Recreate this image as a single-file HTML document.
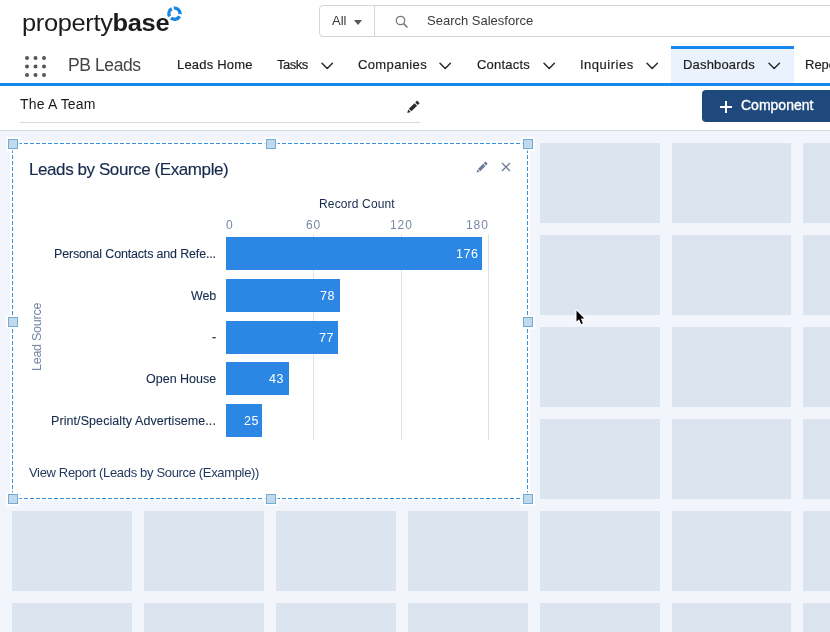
<!DOCTYPE html>
<html><head><meta charset="utf-8">
<style>
*{margin:0;padding:0;box-sizing:border-box}
html,body{width:830px;height:632px;overflow:hidden;background:#f2f5fb;font-family:"Liberation Sans",sans-serif}
.a{position:absolute;white-space:nowrap;will-change:transform}
.st{-webkit-text-stroke:0.2px currentColor}
#top{position:absolute;left:0;top:0;width:830px;height:131px;background:#fff;border-bottom:1px solid #d6dbe4}
.logo{left:22px;top:10px;font-size:23px;color:#1c1c1c;letter-spacing:-0.3px;transform:scaleX(1.105);transform-origin:0 0}
.logo b{font-weight:bold}
.search{left:319px;top:5px;width:540px;height:32px;border:1px solid #d4d4d4;border-radius:4px;background:#fff}
.search .div{position:absolute;left:54px;top:0;width:1px;height:30px;background:#d4d4d4}
.nav{font-size:13px;color:#1f1f1f;-webkit-text-stroke:0.2px #1f1f1f}
.bluebar{left:0;top:83px;width:830px;height:3px;background:#1589ee}
.seltab{left:671px;top:46px;width:123px;height:37px;background:#eaf3fd;border-top:3px solid #1589ee}
.btn{left:702px;top:90px;width:140px;height:32px;background:#1f497d;border-radius:4px}
.cell{position:absolute;width:120px;height:80px;background:#dce5ef}
#card{position:absolute;left:10px;top:141px;width:520px;height:359px;background:#fff}
.dash{position:absolute;background-repeat:repeat}
.h{position:absolute;width:10px;height:10px;background:#bfdaee;border:1px solid #78a9cf;box-shadow:0 0 0 2px rgba(255,255,255,.75)}
.navy{color:#152a4c}
.grey{color:#54698d}
.bar{position:absolute;left:226px;height:33px;background:#2b87e3}
.gl{position:absolute;top:234px;width:1px;height:206px;background:#dde2ea}
.lbl{font-size:12.5px;color:#152a4c;-webkit-text-stroke:0.1px #152a4c;text-align:right;letter-spacing:-0.17px;margin-top:1px}
.val{font-size:12.5px;color:#fff;letter-spacing:0.5px}
.tk{font-size:12px;letter-spacing:0.9px;color:#7688a3}
</style></head><body>
<div id="top"></div>
<div class="a logo">property<b>base</b></div>
<svg class="a" style="left:166px;top:5px" width="18" height="18" viewBox="0 0 18 18">
 <g fill="none" stroke="#1a86de" stroke-width="3.4">
  <path d="M7.82 3.14A5.6 5.6 0 0 1 14.09 9.09"/><path d="M13.53 11.15A5.6 5.6 0 0 1 4.98 13.05"/><path d="M3.60 11.41A5.6 5.6 0 0 1 5.79 3.80"/>
 </g>
</svg>
<div class="a search"><div class="div"></div></div>
<div class="a" style="left:332px;top:13px;font-size:13px;color:#3a3a3a">All</div>
<svg class="a" style="left:354px;top:20px" width="8" height="5"><path d="M0 0H8L4 5Z" fill="#555"/></svg>
<svg class="a" style="left:395px;top:14.5px" width="14" height="14" viewBox="0 0 14 14"><circle cx="5.5" cy="5.5" r="4.2" fill="none" stroke="#777" stroke-width="1.3"/><path d="M8.6 8.6L12.5 12.5" stroke="#777" stroke-width="1.5"/></svg>
<div class="a" style="left:427px;top:13px;font-size:13px;color:#3a3a3a">Search Salesforce</div>

<svg class="a" style="left:24px;top:55px" width="24" height="24" viewBox="0 0 24 24" fill="#555">
 <circle cx="3" cy="3" r="2"/><circle cx="11.5" cy="3" r="2"/><circle cx="20" cy="3" r="2"/>
 <circle cx="3" cy="11.5" r="2"/><circle cx="11.5" cy="11.5" r="2"/><circle cx="20" cy="11.5" r="2"/>
 <circle cx="3" cy="20" r="2"/><circle cx="11.5" cy="20" r="2"/><circle cx="20" cy="20" r="2"/>
</svg>
<div class="a" style="left:68px;top:55px;font-size:17.5px;color:#444;letter-spacing:-0.4px">PB Leads</div>
<div class="a seltab"></div>
<div class="a bluebar"></div>
<div class="a nav" style="left:177px;top:57px;letter-spacing:0.2px">Leads Home</div>
<div class="a nav" style="left:277px;top:57px;letter-spacing:-0.5px">Tasks</div>
<div class="a nav" style="left:358px;top:57px;letter-spacing:0.37px">Companies</div>
<div class="a nav" style="left:477px;top:57px;letter-spacing:0.2px">Contacts</div>
<div class="a nav" style="left:580px;top:57px;letter-spacing:0.5px">Inquiries</div>
<div class="a nav" style="left:683px;top:57px;letter-spacing:0.17px">Dashboards</div>
<div class="a nav" style="left:805px;top:57px">Reports</div>
<svg class="a" style="left:0;top:0" width="830" height="90">
 <g fill="none" stroke="#2a2a2a" stroke-width="1.5" stroke-linecap="round" stroke-linejoin="round">
  <path d="M322 63.3l5.2 5.2 5.2-5.2"/><path d="M440 63.3l5.2 5.2 5.2-5.2"/><path d="M544 63.3l5.2 5.2 5.2-5.2"/><path d="M647 63.3l5.2 5.2 5.2-5.2"/><path d="M769 63.3l5.2 5.2 5.2-5.2"/>
 </g>
</svg>

<div class="a" style="left:20px;top:96px;font-size:14px;color:#1a1a1a;letter-spacing:0.2px">The A Team</div>
<div class="a" style="left:20px;top:122px;width:400px;height:1px;background:#d8d8d8"></div>
<svg class="a" style="left:406px;top:100px" width="14" height="14" viewBox="0 0 14 14"><g transform="translate(1.3 12.9) rotate(-45)" fill="#2a2a2a"><path d="M0 0L3.0 -1.8V1.8Z"/><rect x="4" y="-1.8" width="8" height="3.6"/><rect x="13" y="-1.8" width="2.6" height="3.6"/></g></svg>

<div class="a btn"></div>
<svg class="a" style="left:719px;top:100px" width="14" height="14"><path d="M7 1v12M1 7h12" stroke="#fff" stroke-width="2"/></svg>
<div class="a" style="left:741px;top:97px;font-size:14px;color:#fff;-webkit-text-stroke:0.35px #fff">Component</div>

<!-- grid -->
<div id="grid"><div class="cell" style="left:12px;width:120px;top:143px"></div><div class="cell" style="left:144px;width:120px;top:143px"></div><div class="cell" style="left:276px;width:120px;top:143px"></div><div class="cell" style="left:408px;width:120px;top:143px"></div><div class="cell" style="left:540px;width:120px;top:143px"></div><div class="cell" style="left:672px;width:119px;top:143px"></div><div class="cell" style="left:803px;width:120px;top:143px"></div><div class="cell" style="left:12px;width:120px;top:235px"></div><div class="cell" style="left:144px;width:120px;top:235px"></div><div class="cell" style="left:276px;width:120px;top:235px"></div><div class="cell" style="left:408px;width:120px;top:235px"></div><div class="cell" style="left:540px;width:120px;top:235px"></div><div class="cell" style="left:672px;width:119px;top:235px"></div><div class="cell" style="left:803px;width:120px;top:235px"></div><div class="cell" style="left:12px;width:120px;top:327px"></div><div class="cell" style="left:144px;width:120px;top:327px"></div><div class="cell" style="left:276px;width:120px;top:327px"></div><div class="cell" style="left:408px;width:120px;top:327px"></div><div class="cell" style="left:540px;width:120px;top:327px"></div><div class="cell" style="left:672px;width:119px;top:327px"></div><div class="cell" style="left:803px;width:120px;top:327px"></div><div class="cell" style="left:12px;width:120px;top:419px"></div><div class="cell" style="left:144px;width:120px;top:419px"></div><div class="cell" style="left:276px;width:120px;top:419px"></div><div class="cell" style="left:408px;width:120px;top:419px"></div><div class="cell" style="left:540px;width:120px;top:419px"></div><div class="cell" style="left:672px;width:119px;top:419px"></div><div class="cell" style="left:803px;width:120px;top:419px"></div><div class="cell" style="left:12px;width:120px;top:511px"></div><div class="cell" style="left:144px;width:120px;top:511px"></div><div class="cell" style="left:276px;width:120px;top:511px"></div><div class="cell" style="left:408px;width:120px;top:511px"></div><div class="cell" style="left:540px;width:120px;top:511px"></div><div class="cell" style="left:672px;width:119px;top:511px"></div><div class="cell" style="left:803px;width:120px;top:511px"></div><div class="cell" style="left:12px;width:120px;top:603px"></div><div class="cell" style="left:144px;width:120px;top:603px"></div><div class="cell" style="left:276px;width:120px;top:603px"></div><div class="cell" style="left:408px;width:120px;top:603px"></div><div class="cell" style="left:540px;width:120px;top:603px"></div><div class="cell" style="left:672px;width:119px;top:603px"></div><div class="cell" style="left:803px;width:120px;top:603px"></div></div>

<div id="card"></div>
<svg class="a" style="left:0;top:0" width="830" height="632">
 <g stroke="#3690e0" stroke-width="1" stroke-dasharray="4 2" fill="none">
  <path d="M12 143.5H528"/><path d="M12 498.5H528"/><path d="M12.5 143V498"/><path d="M527.5 143V498"/>
 </g>
</svg>
<div class="h" style="left:8px;top:139px"></div>
<div class="h" style="left:266px;top:139px"></div>
<div class="h" style="left:523px;top:139px"></div>
<div class="h" style="left:8px;top:317px"></div>
<div class="h" style="left:523px;top:317px"></div>
<div class="h" style="left:8px;top:494px"></div>
<div class="h" style="left:266px;top:494px"></div>
<div class="h" style="left:523px;top:494px"></div>

<div class="a navy" style="left:29px;top:160px;font-size:17px;letter-spacing:-0.42px;-webkit-text-stroke:0.15px #152a4c">Leads by Source (Example)</div>
<svg class="a" style="left:475px;top:160px" width="14" height="14" viewBox="0 0 14 14"><g transform="translate(1.6 12.6) rotate(-45) scale(0.9)" fill="#687a96"><path d="M0 0L3.0 -1.8V1.8Z"/><rect x="4" y="-1.8" width="8" height="3.6"/><rect x="13" y="-1.8" width="2.6" height="3.6"/></g></svg>
<svg class="a" style="left:501px;top:162px" width="10" height="10"><path d="M1 1l8 8M9 1l-8 8" stroke="#687a96" stroke-width="1.2"/></svg>

<div class="a navy" style="left:319px;top:197px;font-size:12px;letter-spacing:0.15px">Record Count</div>
<div class="a grey tk" style="left:226px;top:218px">0</div>
<div class="a grey tk" style="left:306px;top:218px">60</div>
<div class="a grey tk" style="left:390px;top:218px">120</div>
<div class="a grey tk" style="left:466px;top:218px">180</div>
<div class="gl" style="left:313px"></div>
<div class="gl" style="left:401px"></div>
<div class="gl" style="left:488px"></div>
<div class="bar" style="top:237px;width:256px"></div>
<div class="bar" style="top:279px;width:113.5px"></div>
<div class="bar" style="top:321px;width:112px"></div>
<div class="bar" style="top:362px;width:62.5px"></div>
<div class="bar" style="top:404px;width:36.4px"></div>
<div class="a val" style="right:352px;top:247px">176</div>
<div class="a val" style="right:495px;top:289px">78</div>
<div class="a val" style="right:496px;top:330.5px">77</div>
<div class="a val" style="right:546px;top:372px">43</div>
<div class="a val" style="right:571px;top:414px">25</div>
<div class="a lbl" style="right:614px;top:246px">Personal Contacts and Refe...</div>
<div class="a lbl" style="right:614px;top:288px">Web</div>
<div class="a lbl" style="right:614px;top:329px">-</div>
<div class="a lbl" style="right:614px;top:371px;letter-spacing:0px">Open House</div>
<div class="a lbl" style="right:614px;top:413px;letter-spacing:0.08px">Print/Specialty Advertiseme...</div>
<div class="a" style="color:#7487a4;left:30px;top:304px;font-size:12.5px;letter-spacing:-0.25px;transform-origin:0 0;transform:translate(0,67px) rotate(-90deg)">Lead Source</div>
<div class="a" style="color:#223a5e;left:29px;top:465px;font-size:13px;letter-spacing:-0.34px">View Report (Leads by Source (Example))</div>
<svg class="a" style="left:572px;top:307px" width="18" height="22" viewBox="0 0 18 22">
 <path d="M4.5 3.6V14.6L7.1 12.2L9.1 17.1L10.9 16.4L8.9 11.6H12.3Z" fill="#000" stroke="#fff" stroke-width="2.2" stroke-linejoin="round" paint-order="stroke"/>
</svg>
</body></html>
